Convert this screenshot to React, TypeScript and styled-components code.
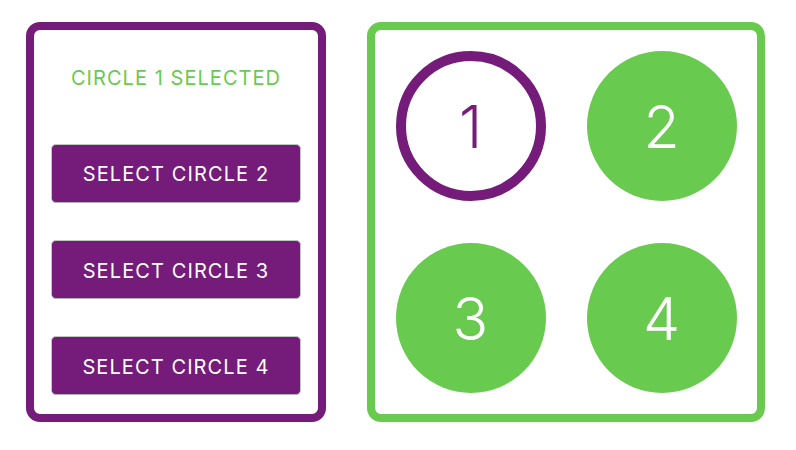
import styled, { createGlobalStyle } from 'styled-components'

const PURPLE = '#751b79'
const GREEN = '#69ca50'

const GlobalStyle = createGlobalStyle`
  html, body {
    margin: 0;
    padding: 0;
    background: #ffffff;
    font-family: Inter, "Noto Sans", sans-serif;
  }
`

const Page = styled.div`
  width: 796px;
  height: 450px;
  box-sizing: border-box;
  padding: 22px 31px 28px 26px;
  display: flex;
  gap: 41px;
`

const Panel = styled.div<{ $color: string; $width: number }>`
  width: ${(p) => p.$width}px;
  height: 400px;
  box-sizing: border-box;
  border: 8px solid ${(p) => p.$color};
  border-radius: 14px;
  background: #fff;
`

const Controls = styled.div`
  height: 100%;
  display: flex;
  flex-direction: column;
  align-items: center;
  justify-content: space-around;
`

const Status = styled.div`
  height: 58px;
  display: flex;
  align-items: center;
  justify-content: center;
  color: ${GREEN};
  font-size: 20px;
  letter-spacing: 1.05px;
  white-space: nowrap;
`

const SelectButton = styled.button`
  width: 250px;
  height: 59px;
  box-sizing: border-box;
  border: 1px solid #c4c4c4;
  border-bottom-color: #b4b4b4;
  border-radius: 5px;
  background: ${PURPLE};
  color: #fff;
  font-family: inherit;
  font-size: 20px;
  letter-spacing: 1.1px;
  padding: 2px 0 0;
  white-space: nowrap;
  cursor: pointer;
`

const CircleGrid = styled.div`
  height: 100%;
  display: flex;
  flex-direction: column;
  justify-content: space-around;
`

const CircleRow = styled.div`
  display: flex;
  justify-content: space-around;
`

const Circle = styled.div<{ $selected: boolean }>`
  width: 150px;
  height: 150px;
  box-sizing: border-box;
  border-radius: 50%;
  display: flex;
  align-items: center;
  justify-content: center;
  font-size: 59px;
  font-weight: 300;
  background: ${(p) => (p.$selected ? '#fff' : GREEN)};
  color: ${(p) => (p.$selected ? PURPLE : '#fff')};
  border: ${(p) => (p.$selected ? `10px solid ${PURPLE}` : 'none')};
`

const selected = 1

export default function App() {
  const others = [1, 2, 3, 4].filter((n) => n !== selected)
  return (
    <>
      <GlobalStyle />
      <Page>
        <Panel $color={PURPLE} $width={300}>
          <Controls>
            <Status>CIRCLE {selected} SELECTED</Status>
            {others.map((n) => (
              <SelectButton key={n}>SELECT CIRCLE {n}</SelectButton>
            ))}
          </Controls>
        </Panel>
        <Panel $color={GREEN} $width={398}>
          <CircleGrid>
            {[
              [1, 2],
              [3, 4],
            ].map((row) => (
              <CircleRow key={row[0]}>
                {row.map((n) => (
                  <Circle key={n} $selected={n === selected}>
                    {n}
                  </Circle>
                ))}
              </CircleRow>
            ))}
          </CircleGrid>
        </Panel>
      </Page>
    </>
  )
}
